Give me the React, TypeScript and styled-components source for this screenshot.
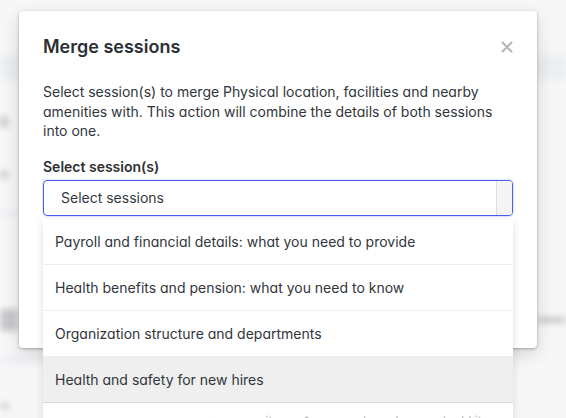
import styled, { createGlobalStyle } from "styled-components";

const GlobalStyle = createGlobalStyle`
  body {
    margin: 0;
    font-family: Inter, "Noto Sans", sans-serif;
    font-feature-settings: "cv11";
    background: #f7f7f8;
  }
`

const Page = styled.div`
  position: relative;
  width: 566px;
  height: 418px;
  overflow: hidden;
  background: #f7f7f8;
`

const Backdrop = styled.div`
  display: flex;
  flex-direction: column;
  filter: blur(3px);
`

const BgRow = styled.div<{ $h: number; $bg?: string }>`
  height: ${p => p.$h}px;
  background: ${p => p.$bg ?? "transparent"};
  display: flex;
  align-items: center;
  justify-content: space-between;
`

const Blob = styled.div<{ $w: number; $h: number; $color: string }>`
  width: ${p => p.$w}px;
  height: ${p => p.$h}px;
  background: ${p => p.$color};
  border-radius: 3px;
`

const Modal = styled.div`
  position: absolute;
  top: 11px;
  left: 19px;
  width: 518px;
  box-sizing: border-box;
  padding: 24px 24px 132px;
  background: #fff;
  border-radius: 4px;
  box-shadow: 0 1px 3px rgba(0, 0, 0, 0.28), 0 6px 18px rgba(0, 0, 0, 0.14);
`

const Header = styled.div`
  display: flex;
  justify-content: space-between;
  align-items: center;
  height: 24px;
`

const Title = styled.h2`
  margin: 0;
  font-size: 18px;
  line-height: 24px;
  font-weight: 600;
  color: #2b3035;
`

const Close = styled.button`
  border: 0;
  background: none;
  padding: 0;
  width: 12px;
  height: 12px;
  display: flex;
  cursor: pointer;
`

const Description = styled.p`
  margin: 23px 0 16px;
  font-size: 14px;
  line-height: 19.6px;
  color: #30363c;
`

const Label = styled.div`
  font-size: 14px;
  line-height: 20px;
  font-weight: 600;
  color: #2b3035;
  margin-bottom: 3px;
`

const SelectWrap = styled.div`
  position: relative;
`

const SelectBox = styled.div`
  height: 36px;
  box-sizing: border-box;
  border: 1px solid #4b5ff2;
  border-radius: 4px;
  box-shadow: 0 0 0 1px rgba(75, 95, 242, 0.15);
  display: flex;
  align-items: stretch;
  overflow: hidden;
`

const Placeholder = styled.div`
  flex: 1;
  display: flex;
  align-items: center;
  padding-left: 17px;
  font-size: 14px;
  color: #33393f;
`

const Indicator = styled.div`
  width: 15px;
  border-left: 1px solid #dcdde0;
  background: #f5f5f6;
`

const Menu = styled.ul`
  position: absolute;
  top: calc(100% + 3px);
  left: 0;
  right: 0;
  margin: 0;
  padding: 0;
  list-style: none;
  background: #fff;
  border-radius: 4px 4px 0 0;
  box-shadow: 0 2px 10px rgba(0, 0, 0, 0.12);
`

const Option = styled.li<{ $active: boolean }>`
  height: 45px;
  display: flex;
  align-items: center;
  padding-left: 12px;
  font-size: 14px;
  color: #30363c;
  background: ${p => p.$active ? "#efefef" : "#fff"};
  border-bottom: 1px solid ${p => p.$active ? "#d3dae1" : "#eceef0"};
`

const Hints = styled.div`
  display: flex;
  justify-content: flex-end;
  gap: 12px;
  padding: 10px 14px 10px 0;
  font-size: 12px;
  color: #b5b8bc;
`

export default function App() {
  const sessions = [
    "Payroll and financial details: what you need to provide",
    "Health benefits and pension: what you need to know",
    "Organization structure and departments",
    "Health and safety for new hires",
  ]

  return (
    <Page>
      <GlobalStyle />
      <Backdrop>
        <BgRow $h={55} />
        <BgRow $h={25} $bg="#eceef1" />
        <BgRow $h={32} />
        <BgRow $h={20}>
          <Blob $w={8} $h={12} $color="#c9cbce" />
        </BgRow>
        <BgRow $h={33} />
        <BgRow $h={20}>
          <Blob $w={8} $h={10} $color="#d0d2d5" />
        </BgRow>
        <BgRow $h={20} />
        <BgRow $h={16}>
          <Blob $w={46} $h={2} $color="#dde1f3" />
        </BgRow>
        <BgRow $h={79} />
        <BgRow $h={40}>
          <Blob $w={18} $h={22} $color="#c6c8cb" />
          <Blob $w={30} $h={6} $color="#c7c9cc" />
        </BgRow>
        <BgRow $h={12} />
        <BgRow $h={16}>
          <Blob $w={40} $h={3} $color="#e4e7f4" />
        </BgRow>
        <BgRow $h={30} />
        <BgRow $h={16}>
          <Blob $w={10} $h={6} $color="#cfd1d4" />
        </BgRow>
      </Backdrop>

      <Modal>
        <Header>
          <Title>Merge sessions</Title>
          <Close aria-label="Close">
            <svg width="12" height="12" viewBox="0 0 12 12">
              <path d="M1.5 1.5l9 9M10.5 1.5l-9 9" stroke="#b3b7bb" strokeWidth="2" strokeLinecap="round" />
            </svg>
          </Close>
        </Header>
        <Description>
          Select session(s) to merge Physical location, facilities and nearby amenities with. This action will combine the details of both sessions into one.
        </Description>
        <Label>Select session(s)</Label>
        <SelectWrap>
          <SelectBox>
            <Placeholder>Select sessions</Placeholder>
            <Indicator />
          </SelectBox>
          <Menu>
            {sessions.map((s, i) => (
              <Option key={i} $active={i === 3}>{s}</Option>
            ))}
            <Hints>
              <span>← remove item</span>
              <span>↑ go up</span>
              <span>↓ go down</span>
              <span>↵ add item</span>
            </Hints>
          </Menu>
        </SelectWrap>
      </Modal>
    </Page>
  );
}
